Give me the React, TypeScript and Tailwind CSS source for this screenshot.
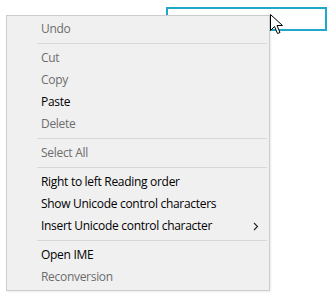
import React from "react";

type Item =
  | { type: "sep" }
  | { type: "item"; label: string; disabled?: boolean; sub?: boolean };

const items: Item[] = [
  { type: "item", label: "Undo", disabled: true },
  { type: "sep" },
  { type: "item", label: "Cut", disabled: true },
  { type: "item", label: "Copy", disabled: true },
  { type: "item", label: "Paste" },
  { type: "item", label: "Delete", disabled: true },
  { type: "sep" },
  { type: "item", label: "Select All", disabled: true },
  { type: "sep" },
  { type: "item", label: "Right to left Reading order" },
  { type: "item", label: "Show Unicode control characters" },
  { type: "item", label: "Insert Unicode control character", sub: true },
  { type: "sep" },
  { type: "item", label: "Open IME" },
  { type: "item", label: "Reconversion", disabled: true },
];

export default function App() {
  return (
    <div
      className="relative w-[332px] h-[299px] bg-white overflow-hidden"
      style={{ fontFamily: '"Open Sans", "Noto Sans", sans-serif' }}
    >
      <div className="absolute left-[166px] top-[7px] w-[161px] h-[24px] border-2 border-[#1fa8c9]" />
      <div className="absolute left-[6px] top-[15px] w-[264px] h-[276px] border border-[#cccccc] bg-[#f0f0f0] pt-[2px] shadow-[1px_1px_2px_rgba(0,0,0,0.08)]">
        {items.map((it, i) =>
          it.type === "sep" ? (
            <div key={i} className="h-[7px] flex items-center pl-[30px] pr-[2px]">
              <div className="h-px w-full bg-[#d7d7d7]" />
            </div>
          ) : (
            <div
              key={i}
              className={`h-[22px] flex items-center pl-[34px] pr-[8px] text-[12px] tracking-[-0.3px] leading-none ${
                it.disabled ? "text-[#6d6d6d]" : "text-black"
              }`}
            >
              <span className="flex-1">{it.label}</span>
              {it.sub && (
                <svg width="6" height="9" viewBox="0 0 6 9" className="mr-[2px]">
                  <path d="M1 1 L4.5 4.5 L1 8" fill="none" stroke="#222" strokeWidth="1.1" />
                </svg>
              )}
            </div>
          )
        )}
      </div>
      <svg
        className="absolute left-[270px] top-[14px]"
        width="14"
        height="21"
        viewBox="0 0 14 21"
      >
        <path
          d="M0.5 0.5 L0.5 16.5 L4.5 12.5 L7.5 19.5 L10 18.5 L7 11.5 L12.5 11.5 Z"
          fill="white"
          stroke="black"
          strokeWidth="1"
          strokeLinejoin="miter"
        />
      </svg>
    </div>
  );
}
